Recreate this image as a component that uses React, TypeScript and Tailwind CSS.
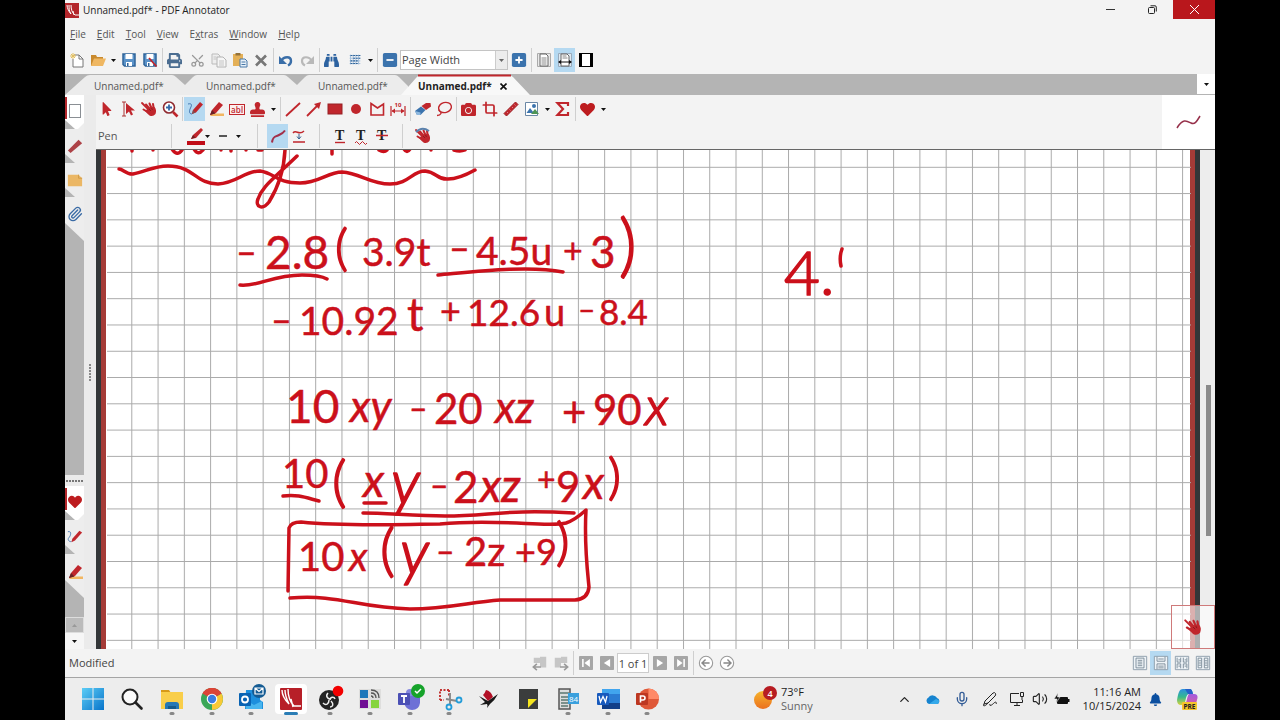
import React from 'react';
import {
  FaBinoculars, FaCamera, FaHeart, FaMousePointer, FaPrint, FaStamp, FaBell,
} from 'react-icons/fa';
import { Crop, Paperclip, Mic, Volume2, ChevronUp, Scissors } from 'lucide-react';

type Kids = { children?: React.ReactNode };

const Svg = ({ s = 18, children }: Kids & { s?: number }) => (
  <svg width={s} height={s} viewBox="0 0 18 18" fill="none" aria-hidden="true">{children}</svg>
);

const Btn = ({ label, on, children }: Kids & { label: string; on?: boolean }) => (
  <button
    type="button"
    aria-label={label}
    className={'flex h-[24px] w-[21px] shrink-0 items-center justify-center ' + (on ? 'bg-[#b5d9f1]' : '')}
  >
    {children}
  </button>
);

const Sep = () => (
  <div className="flex h-[24px] w-1 shrink-0 justify-center"><div className="h-full w-px bg-[#cfcfcf]" /></div>
);

const Caret = ({ label }: { label: string }) => (
  <button type="button" aria-label={label} className="flex h-[24px] w-[10px] shrink-0 items-center justify-center">
    <svg width="5" height="3" viewBox="0 0 5 3"><path d="M0 0h5L2.5 3z" fill="#111" /></svg>
  </button>
);

const RED = '#c0262c';
const BLUE = '#3b73ad';

const Hand = ({ size = 18 }: { size?: number }) => (
  <Svg s={size}>
    <path d="M2 3l7 7" stroke={RED} strokeWidth="1.800" strokeLinecap="round" />
    <path d="M6 4.500l5 6M9.500 3.500l3 7M13 4l1 6M3.500 9.500l5 3" stroke={RED} strokeWidth="2" strokeLinecap="round" />
    <path d="M7 9.500Q10 6 14.500 7Q17 10 15.500 14Q13 17 9.500 15.500Q8 14.500 4.500 10.500z" fill={RED} />
    <path d="M9 9l2 2M11.500 8l1 2" stroke="#7c151a" strokeWidth=".7" />
  </Svg>
);

const Floppy = ({ pen }: { pen?: boolean }) => (
  <Svg>
    <path d="M3 3h12v12H4.500L3 13.500z" stroke="#2f6499" strokeWidth="1.500" fill="#5b93c9" />
    <path d="M5.500 3h7v5h-7z" fill="#fff" />
    <path d="M6 11h6v4H6z" fill="#fff" />
    <path d="M7 12h1.500v3H7z" fill="#2f6499" />
    {pen && <path d="M8 7l7.500 8.500" stroke={RED} strokeWidth="1.800" />}
  </Svg>
);

const FILE_MENU: [string, string, string][] = [
  ['', 'F', 'ile'], ['', 'E', 'dit'], ['', 'T', 'ool'], ['', 'V', 'iew'], ['E', 'x', 'tras'], ['', 'W', 'indow'], ['', 'H', 'elp'],
];

function TitleBar() {
  return (
    <header className="flex h-[22px] items-start justify-between">
      <div className="flex h-[21px] items-center gap-[3px]">
        <svg width="15" height="17" viewBox="0 0 15 17" aria-hidden="true">
          <rect y="1" width="14" height="15" fill="#b3262b" />
          <path d="M2 3c0 3 2 7 4 9C4 9 4 6 4 3M6 3c0 4 1 8 4 10h4M8 9l1 4" stroke="#fff" strokeWidth="1" fill="none" />
        </svg>
        <h1 className="text-[10px] text-[#222]">Unnamed.pdf* - PDF Annotator</h1>
      </div>
      <div className="flex h-[19px]">
        <button type="button" aria-label="Minimize" className="flex w-[42px] items-center justify-center">
          <span className="h-px w-[9px] bg-[#333]" />
        </button>
        <button type="button" aria-label="Restore" className="flex w-[42px] items-center justify-center">
          <svg width="9" height="9" viewBox="0 0 9 9" fill="none" stroke="#222">
            <rect x=".5" y="2.500" width="6" height="6" rx="1" /><path d="M2.500 .8h4.500q1.300 0 1.300 1.300v4.400" />
          </svg>
        </button>
        <button type="button" aria-label="Close" className="flex w-[42px] items-center justify-center bg-[#b9171c]">
          <svg width="9" height="9" viewBox="0 0 9 9" stroke="#fff"><path d="M0 0l9 9M9 0L0 9" /></svg>
        </button>
      </div>
    </header>
  );
}

function MainToolbar() {
  return (
    <div className="flex h-7 items-center pl-px">
      <Btn label="New"><Svg><path d="M6 4h5l4 4v8H5V8" stroke="#777" fill="#fff" /><path d="M11 4v4h4" stroke="#777" /><path d="M5 2v6M2 5h6M3 3l4 4M7 3L3 7" stroke="#e3bf5e" /></Svg></Btn>
      <Btn label="Open"><Svg><path d="M2 15V4h5l1 2h6v2" fill="#c98a2e" /><path d="M2 15L5 7.500h12L14 15z" fill="#efb762" /></Svg></Btn>
      <Caret label="Recent files" />
      <Btn label="Save"><Floppy /></Btn>
      <Btn label="Save as"><Floppy pen /></Btn>
      <Sep />
      <Btn label="Print"><FaPrint size={15} color="#4b6d91" /></Btn>
      <div className="w-0.5" />
      <Btn label="Cut"><Scissors size={15} color="#999" className="-rotate-90" /></Btn>
      <Btn label="Copy"><Svg><path d="M2 3h6l2 2v8H2z" fill="#eee" stroke="#bbb" /><path d="M7 6h6l3 3v7H7z" fill="#f6f6f6" stroke="#b4b4b4" /><path d="M9 10h5M9 12h5M9 14h5M3.500 6h3M3.500 8h3" stroke="#c4c4c4" /></Svg></Btn>
      <Btn label="Paste"><Svg><path d="M2 3h10v12H2z" fill="#e4b057" /><path d="M4.500 2h5v2.500h-5z" fill="#94723a" /><path d="M9 8h5l2 2v6H9z" fill="#e7f0f8" stroke="#4878a8" /><path d="M10.500 11h4M10.500 13.500h4" stroke="#4878a8" /></Svg></Btn>
      <Btn label="Delete"><Svg><path d="M4 4.500l10 10M14 4.500l-10 10" stroke="#777" strokeWidth="2.600" /></Svg></Btn>
      <Sep />
      <Btn label="Undo"><Svg><path d="M4 10C7 5 14 5 14 10c0 2-1 3.500-3 4.500" stroke="#3a6ea8" strokeWidth="2.400" /><path d="M2 5v8h8z" fill="#3a6ea8" /></Svg></Btn>
      <Btn label="Redo"><Svg><path d="M14 10C11 5 4 5 4 10c0 2 1 3.500 3 4.500" stroke="#b9b9b9" strokeWidth="2.200" /><path d="M16 5v8H8z" fill="#b9b9b9" /></Svg></Btn>
      <Sep />
      <Btn label="Find"><FaBinoculars size={15} color="#2c62a0" /></Btn>
      <div className="w-0.5" />
      <Btn label="Paper style"><Svg s={16}><path d="M3 4h12M3 7h12M3 10h12M3 13h12M4 3v11M7 3v11M10 3v11M13 3v11" stroke="#9dbbdb" /><path d="M4 4h11M7 7h8M4 10h8M4 13h8" stroke="#2f6499" strokeWidth="1.200" strokeDasharray="2 1" /></Svg></Btn>
      <Caret label="Paper style options" />
      <Sep />
      <Btn label="Zoom out"><Svg s={16}><rect x="1" y="1" width="16" height="16" rx="2" fill={BLUE} /><path d="M5 9h8" stroke="#fff" strokeWidth="2" /></Svg></Btn>
      <div className="relative h-5 w-[108px]">
        <select aria-label="Zoom" className="block h-5 w-full appearance-none border border-[#c4c4c4] bg-white py-0 pl-px text-[11px] leading-[18px] text-[#444]">
          <option>Page Width</option>
        </select>
        <span className="pointer-events-none absolute top-px right-px bottom-px flex w-3 items-center justify-center border-l border-[#ccc] bg-[#ececec]">
          <svg width="5" height="3" viewBox="0 0 5 3"><path d="M0 0h5L2.500 3z" fill="#666" /></svg>
        </span>
      </div>
      <Btn label="Zoom in"><Svg s={16}><rect x="1" y="1" width="16" height="16" rx="2" fill={BLUE} /><path d="M5 9h8M9 5v8" stroke="#fff" strokeWidth="2" /></Svg></Btn>
      <Sep />
      <Btn label="Full page"><Svg><path d="M2.500 2.500h13v13h-13z" stroke="#aaa" fill="#e9e9e9" /><path d="M5 3h6l2 2v10H5z" fill="#fff" stroke="#666" /><path d="M6.500 7h5M6.500 9h5M6.500 11h5M6.500 13h5" stroke="#888" /></Svg></Btn>
      <Btn label="Page width" on><Svg><path d="M2.500 2.500h13v13h-13z" stroke="#9ab" fill="#dfe9f1" /><path d="M5 3h6l2 2v10H5z" fill="#fff" stroke="#666" /><path d="M6.500 5h4M6.500 7h5" stroke="#888" /><path d="M3 11h12" stroke="#111" /><path d="M2 11l3-2v4zM16 11l-3-2v4z" fill="#111" /></Svg></Btn>
      <Btn label="Full screen"><Svg><rect x="2" y="2" width="14" height="14" fill="#000" /><rect x="5" y="3" width="8" height="12" fill="#fff" /></Svg></Btn>
    </div>
  );
}

function DocumentTabs() {
  return (
    <nav aria-label="Documents" className="relative flex h-[21px] bg-[#b4b4b4] pt-1 text-[10px]">
      <svg className="absolute top-0 left-0" width="466" height="21" viewBox="0 0 466 21" aria-hidden="true">
        <path d="M0 21L20 3Q22 1 25 1H107Q109 1 111 3L120 11L128 3Q130 1 132 1H219Q221 1 223 3L232 11L240 3Q242 1 244 1H330Q332 1 334 3L343 12V21z" fill="#ececec" />
        <path d="M336 21L351 4Q353 1 357 1H443Q446 1 448 3L465 21z" fill="#f8f8f8" />
        <path d="M353 1.500H446" stroke={RED} strokeWidth="2" />
      </svg>
      <div className="relative flex pl-[29px]">
        {[0, 1, 2].map((i) => (
          <a key={i} href="#doc" className="flex w-[112px] shrink-0 items-center text-[#555]">Unnamed.pdf*</a>
        ))}
      </div>
      <a href="#doc" className="relative -ml-3 flex shrink-0 items-center gap-2 font-bold text-[#222]">
        Unnamed.pdf*
        <svg width="7" height="7" viewBox="0 0 7 7"><path d="M.5 .5l6 6M6.500 .5l-6 6" stroke="#111" strokeWidth="1.600" /></svg>
      </a>
      <div className="flex-1" />
      <button type="button" aria-label="List documents" className="-mt-1 mb-px flex w-[18px] items-center justify-center bg-white">
        <svg width="5" height="3" viewBox="0 0 5 3"><path d="M0 0h5L2.500 3z" fill="#111" /></svg>
      </button>
    </nav>
  );
}

const Pen = () => (
  <Svg><path d="M2 4c4-1 4 1 2.500 4S3 14 6 14" stroke="#4477b0" /><path d="M6 14l1-4 7-8 3 2.500-7 8z" fill={RED} /><path d="M6 14l1-4 2.500 2.500z" fill="#7a5050" /></Svg>
);

const Marker = () => (
  <Svg><path d="M5 13.500h12v2.500H3z" fill="#f2b661" /><path d="M3 15l2-5 7-8 4 3-7 8z" fill={RED} /><path d="M3 15l2-5 3.500 3.500z" fill="#6a2226" /></Svg>
);

function DrawingTools() {
  return (
    <div className="flex h-7 items-center">
      <Btn label="Select"><FaMousePointer size={14} color={RED} /></Btn>
      <Btn label="Select text"><Svg><path d="M3 2h4M5 2v14M3 16h4" stroke="#a33" /><path d="M7 3v11l3-2.500 2 4 2-1-2-4h4z" fill={RED} /></Svg></Btn>
      <Btn label="Pan"><Hand /></Btn>
      <Btn label="Magnify"><Svg><circle cx="8" cy="7.500" r="5.500" stroke="#8f2a30" strokeWidth="1.600" fill="#fff" /><path d="M12 12l4.500 4.500" stroke={RED} strokeWidth="2.600" /><path d="M8 4.500v6M5 7.500h6" stroke="#3468a8" strokeWidth="1.800" /></Svg></Btn>
      <Sep />
      <Btn label="Pen" on><Pen /></Btn>
      <Btn label="Marker"><Marker /></Btn>
      <Btn label="Text"><Svg><rect x="1.500" y="4.500" width="15" height="10" stroke={RED} fill="#fbeeee" /><text x="3" y="12.500" fontSize="8" fontWeight="600" fill={RED}>ab</text><path d="M14 6v7" stroke={RED} /></Svg></Btn>
      <Btn label="Stamp"><FaStamp size={15} color={RED} /></Btn>
      <Caret label="Stamps" />
      <Sep />
      <Btn label="Line"><Svg><path d="M2 16L16 3" stroke={RED} strokeWidth="1.800" /></Svg></Btn>
      <Btn label="Arrow"><Svg><path d="M2 16L13 5" stroke={RED} strokeWidth="1.800" /><path d="M16 2l-2 7-5-5z" fill={RED} /></Svg></Btn>
      <Btn label="Rectangle"><Svg><rect x="2" y="4" width="14" height="10" fill={RED} stroke="#962025" /></Svg></Btn>
      <Btn label="Ellipse"><Svg><circle cx="9" cy="9" r="5" fill={RED} /></Svg></Btn>
      <Btn label="Polygon"><Svg><path d="M3 3.500l6.500 4.500L15.500 4v11H3z" stroke={RED} strokeWidth="1.600" /></Svg></Btn>
      <Btn label="Measure"><Svg><path d="M2 6v10M16 6v10M3 11h12" stroke={RED} strokeWidth="1.200" /><path d="M2.500 11l3.500-2.500v5zM15.500 11l-3.500-2.500v5z" fill={RED} /><text x="5.500" y="7" fontSize="6" fontWeight="700" fill={RED}>10</text></Svg></Btn>
      <Sep />
      <Btn label="Eraser"><Svg><path d="M1 11l6-4.500 4.500 3.500-5 5H3z" fill={BLUE} /><path d="M7.500 6L12 3h4.500l.5 3.500-5 3.500z" fill={RED} /><path d="M1 11l5.500 1.500v2.500H3z" fill="#8db8df" /></Svg></Btn>
      <Btn label="Lasso"><Svg><ellipse cx="10" cy="7.500" rx="6.500" ry="5" stroke={RED} strokeWidth="1.400" transform="rotate(-15 10 7.500)" /><path d="M4 9.500c-1 2 3 2 2 4s-2 2-4 2" stroke={RED} strokeWidth="1.400" /></Svg></Btn>
      <Sep />
      <Btn label="Snapshot"><FaCamera size={15} color={RED} /></Btn>
      <Btn label="Crop"><Crop size={16} color={RED} strokeWidth={2.600} /></Btn>
      <Btn label="Ruler"><Svg><path d="M2 13.500L13.500 2 16 4.500 4.500 16z" fill={RED} stroke="#9d2025" /><path d="M5 12l1 1M7.500 9.500l1 1M10 7l1 1M12.500 4.500l1 1" stroke="#eab" strokeWidth=".7" /></Svg></Btn>
      <Btn label="Image"><Svg><path d="M2.500 2.500h12v13h-12z" stroke="#6a87a5" fill="#fff" /><path d="M3.500 13l3.500-5 4 5z" fill="#3b73ad" /><circle cx="11" cy="6" r="2" fill="#3b73ad" /><path d="M8 14h8l-4-5z" fill="#4d9455" /></Svg></Btn>
      <Caret label="Images" />
      <Btn label="Formula"><Svg><path d="M14 6V3H3.500l5.500 6-5.500 6H14v-3" stroke={RED} strokeWidth="2.200" /></Svg></Btn>
      <Sep />
      <Btn label="Favorites"><FaHeart size={15} color="#bd1c1f" /></Btn>
      <Caret label="More favorites" />
    </div>
  );
}

const Tee = ({ children }: Kids) => (
  <Svg><text x="4" y="13" fontSize="14" fontWeight="700" fontFamily="Liberation Serif, serif" fill="#222">T</text>{children}</Svg>
);

function ToolOptions() {
  return (
    <div className="flex h-[26px] items-center">
      <span className="w-[73px] pl-0.5 text-[11px] text-[#555]">Pen</span>
      <Sep />
      <div className="w-3" />
      <Btn label="Color"><Svg><path d="M4 12l2-4 8-7 2 2-7 8z" fill={RED} /><path d="M4 12l2-4 2.500 2.500z" fill="#701c20" /><path d="M0 14h18v4H0z" fill="#c00d18" /></Svg></Btn>
      <div className="-ml-1 flex">
        <Caret label="Colors" />
        <Btn label="Width"><svg width="8" height="2" viewBox="0 0 8 2"><path d="M0 1h8" stroke="#222" strokeWidth="1.500" /></svg></Btn>
      </div>
      <Caret label="Widths" />
      <div className="ml-3"><Sep /></div>
      <div className="w-2" />
      <Btn label="Smooth" on><Svg><path d="M3 15.500c1-7 4-6 6-7s5-2 7-5" stroke="#a3304a" strokeWidth="2" /></Svg></Btn>
      <Btn label="Pressure"><Svg><path d="M3 6c3-4 6 3 11-2M3 15h12" stroke={RED} strokeWidth="1.400" /><path d="M9 7v5M7 9.500L9 12l2-2.500" stroke="#345f90" /></Svg></Btn>
      <div className="ml-2"><Sep /></div>
      <div className="w-2" />
      <Btn label="Underline text"><Tee><path d="M4 15.500h10" stroke={RED} strokeWidth="1.400" /></Tee></Btn>
      <Btn label="Squiggle text"><Tee><path d="M3 16q1.500-3 3 0t3 0 3 0 3 0" stroke={RED} /></Tee></Btn>
      <Btn label="Strike text"><Tee><path d="M3 8.500h12" stroke={RED} strokeWidth="1.500" /></Tee></Btn>
      <div className="ml-2"><Sep /></div>
      <div className="w-2" />
      <Btn label="Touch mode">
        <span className="relative flex">
          <Hand />
          <svg className="absolute top-0 left-0" width="18" height="7" viewBox="0 0 18 7" fill="none"><path d="M2 5Q8-1 15 4" stroke="#5b82ad" strokeWidth="2" /></svg>
        </span>
      </Btn>
    </div>
  );
}

const SideTab = ({ label, on, last, children }: Kids & { label: string; on?: boolean; last?: boolean }) => (
  <button
    type="button"
    aria-label={label}
    className={'relative flex w-[19px] shrink-0 justify-center pt-[9px] ' + (last ? 'h-11 ' : 'h-[34px] ') + (on ? 'bg-white' : 'bg-[#ededed]')}
  >
    <svg className="absolute bottom-0 left-0" width="19" height="18" viewBox="0 0 19 18" aria-hidden="true">
      {last ? <path d="M0 0l19 18H0z" fill="#b4b4b4" /> : <path d="M0 9l10 9H0z" fill="#b4b4b4" />}
      {on && <path d="M13 18l6-6v6z" fill="#ededed" />}
    </svg>
    {on && <span className="absolute top-0.5 left-0 h-[22px] w-0.5 bg-[#b3262b]" />}
    <span className="relative">{children}</span>
  </button>
);

function Sidebar() {
  return (
    <aside className="flex w-[31px] shrink-0 bg-[#ebebeb]">
      <div className="flex w-[19px] flex-col bg-[#b4b4b4]">
        <SideTab label="Pages" on><svg width="12" height="15" viewBox="0 0 12 15"><rect x=".5" y=".5" width="11" height="13" fill="#fff" stroke="#8a8f94" /></svg></SideTab>
        <SideTab label="Annotations"><Svg s={16}><path d="M1 14L13 2l4 4L4 17z" fill="#ad4247" /></Svg></SideTab>
        <SideTab label="Bookmarks"><Svg s={16}><path d="M1 3h12l4 4v9H1z" fill="#ebb765" /><path d="M13 3v4h4" stroke="#cf9a45" /></Svg></SideTab>
        <SideTab label="Attachments" last><Paperclip size={16} color="#3a6ba5" /></SideTab>
        <div className="min-h-10 flex-1" />
        <div className="flex h-[11px] items-center justify-center gap-px bg-[#ebebeb]">
          {[0, 1, 2, 3, 4, 5].map((i) => <span key={i} className="h-0.5 w-0.5 bg-[#777]" />)}
        </div>
        <SideTab label="Favorites" on><FaHeart size={14} color="#bd1c1f" /></SideTab>
        <SideTab label="Favorite pen"><Svg s={16}><path d="M1 3c5-1 3 5 1 7s1 5 3 4" stroke="#4477b0" /><path d="M5 15l1-4 8-9 3 2-8 9z" fill={RED} /></Svg></SideTab>
        <SideTab label="Favorite marker" last><Marker /></SideTab>
        <div className="h-[19px] bg-[#b4b4b4]" />
        <button type="button" aria-label="Scroll up" className="flex h-4 items-center justify-center border border-[#ddd] bg-[#bbb]">
          <svg width="5" height="3" viewBox="0 0 5 3"><path d="M0 3h5L2.500 0z" fill="#999" /></svg>
        </button>
        <button type="button" aria-label="Scroll down" className="flex h-4 items-center justify-center bg-[#f6f6f6]">
          <svg width="5" height="3" viewBox="0 0 5 3"><path d="M0 0h5L2.500 3z" fill="#111" /></svg>
        </button>
      </div>
      <div className="flex flex-1 flex-col items-center justify-center gap-px">
        {[0, 1, 2, 3, 4, 5].map((i) => <span key={i} className="h-0.5 w-0.5 bg-[#888]" />)}
      </div>
    </aside>
  );
}

type Note = [text: string, x: number, y: number, size: number, italic?: boolean];

const NOTES: Note[] = [
  ['–', 236, 265, 36], ['2.8', 265, 269, 46], ['(', 335, 265, 50], ['3.9t', 362, 266, 39], ['–', 449, 261, 36],
  ['4.5u', 476, 265, 39], ['+', 563, 263, 34], ['3', 590, 268, 44], [')', 619, 269, 68],
  ['–', 271, 333, 36], ['10.92', 299, 335, 39], ['t', 407, 331, 46], ['+', 440, 324, 36], ['12.6', 467, 326, 37],
  ['u', 544, 326, 38], ['–', 578, 320, 30], ['8.4', 599, 325, 35],
  ['10', 286, 423, 46], ['xy', 350, 422, 44, true], ['–', 409, 420, 32], ['20', 434, 424, 42], ['xz', 495, 423, 44, true],
  ['+', 562, 427, 42], ['90', 593, 425, 42], ['x', 645, 425, 54, true],
  ['10', 282, 488, 40], ['(', 332, 501, 56], ['x', 363, 497, 46, true], ['y', 391, 504, 62, true], ['–', 430, 497, 32],
  ['2', 453, 503, 44], ['xz', 480, 502, 46, true], ['+', 537, 491, 32], ['9', 556, 502, 42], ['x', 583, 499, 46, true],
  [')', 608, 494, 50],
  ['10', 298, 571, 40], ['x', 349, 571, 40, true], ['(', 380, 570, 58], ['y', 400, 574, 62, true], ['–', 436, 563, 32],
  ['2z', 464, 566, 40], ['+9', 515, 565, 36], [')', 556, 560, 52],
  ['4.', 784, 295, 62],
];

const STROKES = [
  'M119 169C123 169 127 175 133 174C145 172 153 166 168 166C194 166 196 184 218 184C237 183 244 171 260 171C275 173 276 183 300 183C319 183 328 172 342 172C360 173 370 184 390 184C409 184 412 171 425 171C437 172 437 180 448 179C457 179 466 175 475 170',
  'M285 150C284 171 279 186 269 202C262 211 255 206 258 199C262 187 271 181 297 156',
  'M172 149q5 8 10 1M194 149q4 7 9 1M132 149v2M153 149v1M221 149v1M231 149v2M246 149v1M258 150h4M332 149v5M379 150q5 3 8 0M404 149q3 5 6 0M431 149v1M454 150q6 2 11 0',
  'M240 285C258 287 272 275 302 275Q320 275 327 279',
  'M438 275C472 272 528 265 563 272',
  'M283 496C298 494 307 498 319 501', 'M364 503h22',
  'M363 513C386 513 415 516 445 516C490 516 505 509 574 513',
  'M288 591L289 528Q291 522 301 522C350 527 405 524 440 524C500 518 548 528 566 523Q575 520 586 510C584 545 588 576 589 587Q588 599 575 600H500C470 602 448 609 410 609C357 608 340 594 290 598',
  'M842 249q-3 8-1 17',
];

function Workspace() {
  return (
    <main className="relative flex min-h-0 flex-1 border-t border-[#666] bg-[#ededed]">
      <div className="w-[5px] bg-[#333638]" />
      <div className="w-[5px] bg-[#a53b37]" />
      <div className="flex-1 bg-white" />
      <div className="w-[5px] bg-[#a53b37]" />
      <div className="mr-[15px] w-[5px] bg-[#333638]" />
      <svg className="absolute inset-y-0 right-6 left-[11px] h-full w-[calc(100%-35px)]" role="img" aria-label="Graph paper with ink notes">
        <defs>
          <pattern id="squares" x="24.300" y="16.800" width="26.270" height="26.280" patternUnits="userSpaceOnUse">
            <path d="M.5 0V26.280M0 .5H26.270" stroke="#a9a9a9" strokeWidth="1" />
          </pattern>
        </defs>
        <rect width="100%" height="100%" fill="url(#squares)" />
        <g transform="translate(-107 -150)" fontFamily="Lato, sans-serif" fill="#cb101b" stroke="#cb101b" strokeLinejoin="round" strokeLinecap="round">
          <g fill="none" strokeWidth="3.500">{STROKES.map((d) => <path key={d} d={d} />)}</g>
          <g>
            {NOTES.map(([t, x, y, size, italic]) => (
              <text
                key={x + '-' + y}
                x={x}
                y={y}
                fontSize={size}
                fontStyle={italic ? 'italic' : 'normal'}
                fontWeight={size > 48 ? 300 : 400}
                strokeWidth={size > 48 ? 1.7 : 0.5}
              >
                {t}
              </text>
            ))}
          </g>
        </g>
      </svg>
      <div className="absolute top-[235px] right-1 h-[151px] w-[5px] bg-[#8b8b8b]" />
      <button type="button" aria-label="Touch panning" className="absolute right-0 bottom-0 flex h-11 w-11 items-center justify-center border border-[#cf7a7a] bg-white/60">
        <Hand size={20} />
      </button>
    </main>
  );
}

const PageLayout = ({ kind }: { kind: number }) => (
  <Svg s={16}>
    <path d="M1.500 1.500h15v15h-15z" stroke="#8a9aa8" fill="#eef3f7" />
    {kind === 0 && <path d="M4.500 3.500h9v11h-9zM6.500 6h5M6.500 8h5M6.500 10h5M6.500 12h5" stroke="#788896" />}
    {kind === 1 && <path d="M4.500 2v5h9V2M4.500 16v-6h9v6M6 4.500h6M6 12.500h6M6 14.500h6" stroke="#788896" />}
    {kind === 2 && <path d="M3.500 3v5h4V3M10.500 3v5h4V3M3.500 15v-5h4v5M10.500 15v-5h4v5M5 5.500h2M12 5.500h2M5 12.500h2M12 12.500h2" stroke="#788896" />}
    {kind === 3 && <path d="M3.500 3.500h4v11h-4zM10.500 3.500h4v11h-4zM4 6.500h3M4 9h3M4 11.500h3M11 6.500h3M11 9h3M11 11.500h3" stroke="#788896" />}
  </Svg>
);

const NavBtn = ({ label, d }: { label: string; d: string }) => (
  <Btn label={label}><Svg s={14}><rect width="18" height="18" rx="1" fill="#a6a6a6" /><path d={d} fill="#fff" /></Svg></Btn>
);

function StatusBar() {
  return (
    <footer className="grid h-[29px] grid-cols-[1fr_auto_1fr] items-center border-b border-[#a5a5a5] bg-[#f3f3f3] text-[11px] text-[#444]">
      <span className="pl-1">Modified</span>
      <div className="flex items-center pr-[14px]">
        {[0, 1].map((i) => (
          <Btn key={i} label={i ? 'Next view' : 'Previous view'}>
            <Svg s={16}><path d="M2 3h7V2h7v12H2z" fill="#c6c6c6" /><path d={i ? 'M9 9h9v9H9z' : 'M0 9h9v9H0z'} fill="#f3f3f3" /><path d={i ? 'M8 13.500h8M12.500 10l4 3.500-4 3.500' : 'M2 13.500h8M5.500 10l-4 3.500 4 3.500'} stroke="#999" strokeWidth="1.800" /></Svg>
          </Btn>
        ))}
        <Sep />
        <NavBtn label="First page" d="M4 4h2v10H4zM14 4v10L7 9z" />
        <NavBtn label="Previous page" d="M13 4v10L5 9z" />
        <input aria-label="Page" defaultValue="1 of 1" className="h-5 w-8 border border-[#ccc] bg-white text-center text-[11px]" />
        <NavBtn label="Next page" d="M5 4v10l8-5z" />
        <NavBtn label="Last page" d="M4 4v10l7-5zM12 4h2v10h-2z" />
        <Sep />
        <Btn label="Back"><Svg s={16}><circle cx="9" cy="9" r="7.500" stroke="#999" strokeWidth="1.200" fill="#fff" /><path d="M13 9H5M8.500 5L4.500 9l4 4" stroke="#888" strokeWidth="1.600" /></Svg></Btn>
        <Btn label="Forward"><Svg s={16}><circle cx="9" cy="9" r="7.500" stroke="#999" strokeWidth="1.200" fill="#fff" /><path d="M5 9h8M9.500 5l4 4-4 4" stroke="#888" strokeWidth="1.600" /></Svg></Btn>
      </div>
      <div className="flex justify-end pr-0.5">
        {['Single page', 'Continuous', 'Facing continuous', 'Facing'].map((l, i) => (
          <Btn key={l} label={l} on={i === 1}><PageLayout kind={i} /></Btn>
        ))}
      </div>
    </footer>
  );
}

const AppIcon = ({ children }: Kids) => (
  <svg width="24" height="24" viewBox="0 0 24 24" fill="none" className="overflow-visible" aria-hidden="true">{children}</svg>
);

const APPS: { name: string; running?: boolean; active?: boolean; icon: React.ReactNode }[] = [
  { name: 'Start', icon: <AppIcon><defs><linearGradient id="win" x1="0" y1="0" x2="1" y2="1"><stop stopColor="#5ccdf6" /><stop offset="1" stopColor="#0874ca" /></linearGradient></defs><path d="M1 1h10.500v10.500H1zM12.500 1H23v10.500H12.500zM1 12.500h10.500V23H1zM12.500 12.500H23V23H12.500z" fill="url(#win)" /></AppIcon> },
  { name: 'Search', icon: <AppIcon><circle cx="10" cy="10" r="7.500" stroke="#222" strokeWidth="2" fill="#fafafa" /><path d="M15.500 15.500l6 6" stroke="#222" strokeWidth="2.600" strokeLinecap="round" /></AppIcon> },
  { name: 'File Explorer', running: true, icon: <AppIcon><path d="M1 3h8l2 3H1z" fill="#d79a18" /><path d="M1 5h22v17H1z" fill="#f9ce4a" /><path d="M5 22v-4q0-3 3-3h8q3 0 3 3v4z" fill="#2678b5" /><path d="M8 19h8v3H8z" fill="#155a8b" /></AppIcon> },
  { name: 'Chrome', running: true, icon: <AppIcon><circle cx="12" cy="12" r="11" fill="#3aa757" /><path d="M12 12l9.500-5.500A11 11 0 0112 23z" fill="#f8c935" /><path d="M2.500 6.500A11 11 0 0121.500 6.500H12z" fill="#db4437" /><path d="M12 12L2.500 6.500A11 11 0 0121.500 6.500z" fill="#db4437" /><circle cx="12" cy="12" r="5.300" fill="#fff" /><circle cx="12" cy="12" r="4.200" fill="#3c7de0" /></AppIcon> },
  { name: 'Outlook', running: true, icon: <AppIcon><path d="M7 3h14v10l3 2v7H6z" fill="#1d8fdd" /><path d="M7 13l8 5 8-4v8H7z" fill="#48b5ee" /><rect y="6" width="12" height="13" rx="1" fill="#0963b3" /><circle cx="6" cy="12.500" r="3" stroke="#fff" strokeWidth="1.800" /><circle cx="20" cy="4" r="7" fill="#145b93" /><path d="M16 1h8v6h-8zM16 1l4 3.500L24 1" stroke="#fff" strokeWidth="1.200" /></AppIcon> },
  { name: 'PDF Annotator', running: true, active: true, icon: <AppIcon><rect x="1" y="1" width="22" height="22" rx="1" fill="#b71f28" /><path d="M3 3c0 5 3 10 7 14C7 11 6 7 6 3M9 2c0 7 2 13 6 17h7M12 12l2 8" stroke="#fff" strokeWidth="1.400" /></AppIcon> },
  { name: 'OBS Studio', running: true, icon: <AppIcon><circle cx="11" cy="13" r="10" fill="#232323" /><path d="M10 6c-3 3 0 6 2 6M17 12c-1-3-5-2-5 1M5 16c3 3 6 1 6-3M12 20c3 0 4-3 1-6" stroke="#eee" strokeWidth="1.500" /><circle cx="20" cy="4" r="5.300" fill="#f20000" /></AppIcon> },
  { name: 'Quick Assist', running: true, icon: <AppIcon><rect x="1" y="2" width="22" height="20" fill="#dededd" /><path d="M2 3h8v8H2z" fill="#1d78ba" /><path d="M2 13h8v8H2z" fill="#700d94" /><path d="M13 13h8v8h-8z" fill="#86d43f" /><path d="M13 3q8 0 8 8M13 6q5 0 5 5M13 9q2 0 2 2" stroke="#555" strokeWidth="1.300" /></AppIcon> },
  { name: 'Teams', running: true, icon: <AppIcon><circle cx="12" cy="6" r="4" fill="#8588df" /><path d="M6 9h16v7q-1 7-8 7-6 0-8-7z" fill="#6e70d6" /><rect y="6" width="12" height="12" rx="1" fill="#4b50b5" /><path d="M3 9h6M6 9v7" stroke="#fff" strokeWidth="1.800" /><circle cx="20" cy="4" r="7" fill="#16a32a" /><path d="M17 4l2 2 4-4" stroke="#fff" strokeWidth="1.500" /></AppIcon> },
  { name: 'Snipping Tool', running: true, icon: <AppIcon><path d="M12 3H3v10M12 3v6M3 13h4" stroke="#c43634" strokeWidth="2" strokeDasharray="2 1.500" /><path d="M13 6v12M9 12l11 2" stroke="#888" strokeWidth="1.900" /><circle cx="12" cy="20" r="2.500" stroke="#239cd8" strokeWidth="1.800" /><circle cx="22" cy="13" r="2.500" stroke="#239cd8" strokeWidth="1.800" /></AppIcon> },
  { name: 'Racket', icon: <AppIcon><path d="M6 8Q8 6 9 3q5 1 7 7l-5 4z" fill="#b21026" /><path d="M2 9l9 5L21 7q-3 6-8 10l-3 4q1-3 0-4l-7 1 5-3z" fill="#181818" /></AppIcon> },
  { name: 'Sticky Notes', icon: <AppIcon><path d="M3 2h19v20H3z" fill="#3b3d3d" /><path d="M12 12h9l-9 9z" fill="#f5e51e" /></AppIcon> },
  { name: 'Calculator', running: true, icon: <AppIcon><path d="M3 2h11v20H3z" fill="#ddd" stroke="#555" strokeWidth="1.500" /><path d="M4 6h9M5 10h7M5 13h7M5 16h7M5 19h7" stroke="#5c7770" strokeWidth="1.400" /><rect x="12" y="6" width="11" height="11" fill="#3aa0dd" /><text x="13" y="15" fontSize="8" fill="#fff">84</text></AppIcon> },
  { name: 'Word', running: true, icon: <AppIcon><path d="M6 2h18v20H6z" fill="#2b7cd3" /><path d="M6 2h18v5H6z" fill="#41a5ee" /><path d="M6 16h18v6H6z" fill="#123f88" /><rect x="1" y="6" width="12" height="12" rx="1" fill="#185abd" /><path d="M3 9l1.500 6L7 9.500 9.500 15 11 9" stroke="#fff" strokeWidth="1.300" /></AppIcon> },
  { name: 'PowerPoint', running: true, icon: <AppIcon><circle cx="13.500" cy="12" r="10.500" fill="#df5838" /><path d="M13.500 1.500A10.500 10.500 0 0124 12H13.500z" fill="#ff8a68" /><rect x="1" y="6" width="12" height="12" rx="1" fill="#bd3721" /><path d="M5.500 15.500V9h2.500q2 0 2 2t-2 2H5.500" stroke="#fff" strokeWidth="1.600" /></AppIcon> },
];

function Taskbar() {
  return (
    <nav aria-label="Taskbar" className="flex h-[42px] items-center bg-[#ededed] pl-2">
      <div className="grid w-[594px] shrink-0 grid-cols-15">
        {APPS.map((a) => (
          <button key={a.name} type="button" aria-label={a.name} className="relative flex h-[42px] items-center justify-center">
            {a.active && <span className="absolute inset-x-1 inset-y-1.5 rounded-sm bg-white" />}
            <span className="relative">{a.icon}</span>
            {a.running && (
              <span className={'absolute bottom-[5px] left-1/2 h-[3px] -translate-x-1/2 rounded-full ' + (a.active ? 'w-3.5 bg-[#2a7db5]' : 'w-[5px] bg-[#888]')} />
            )}
          </button>
        ))}
      </div>
      <div className="ml-[86px] flex items-center gap-[3px]">
        <svg width="25" height="26" viewBox="0 0 25 26" aria-hidden="true">
          <defs><linearGradient id="sun" x1="0" y1="0" x2="0" y2="1"><stop stopColor="#f6b42c" /><stop offset="1" stopColor="#eb701f" /></linearGradient></defs>
          <circle cx="10" cy="14" r="9" fill="url(#sun)" /><circle cx="17" cy="7" r="7" fill="#b71c22" />
          <text x="17" y="10.500" fontSize="9" textAnchor="middle" fontWeight="600" fill="#fff">4</text>
        </svg>
        <div className="text-[11px] leading-[14px] text-[#222]"><p>73°F</p><p className="text-[#666]">Sunny</p></div>
      </div>
      <div className="flex-1" />
      <div className="flex shrink-0 items-center text-[#222]">
        <button type="button" aria-label="Hidden icons" className="flex w-[26px] justify-center"><ChevronUp size={15} /></button>
        <button type="button" aria-label="OneDrive" className="flex w-8 justify-center"><svg width="16" height="11" viewBox="0 0 16 11"><path d="M4 10a3.500 3.500 0 01-.5-6.500A5 5 0 0112 4a3.200 3.200 0 01.5 6z" fill="#1683cf" /><path d="M4 10l7-5 3 1.500a3 3 0 01-1.500 3.500z" fill="#35a9ea" /></svg></button>
        <button type="button" aria-label="Microphone" className="flex w-[26px] justify-center"><Mic size={16} color="#345d97" /></button>
        <button type="button" aria-label="Pen menu" className="flex w-[30px] justify-center"><svg width="16" height="16" viewBox="0 0 16 16" fill="none" stroke="#222"><path d="M3 10L11 2q2-1 2.500.5T13 5L6 12l-4 1zM2 13c-2 3 2 2 4-1M8 13c-1 3 2 1 4-1s3 0 2 1" /></svg></button>
        <button type="button" aria-label="Network" className="flex w-6 justify-center"><svg width="16" height="16" viewBox="0 0 16 16" fill="none" stroke="#222"><path d="M10 2.500H1.500v9h12V9M5 14.500h6M8 12v2M11.500 1.500h3v4h-3zM13 5.500V9" /></svg></button>
        <button type="button" aria-label="Volume" className="flex w-[22px] justify-center"><Volume2 size={16} strokeWidth={1.700} /></button>
        <button type="button" aria-label="Battery" className="flex w-[22px] justify-center"><svg width="16" height="12" viewBox="0 0 16 12"><rect x="3" y="4" width="11" height="7" rx="1" fill="#111" /><path d="M14 6h1.500v3H14z" fill="#111" /><path d="M4 0L0 6h3l-1 4 4-6H3.500z" fill="#111" stroke="#ededed" strokeWidth=".6" /></svg></button>
        <time className="w-[68px] text-right text-[11px] leading-[14px]">11:16 AM<br />10/15/2024</time>
        <button type="button" aria-label="Notifications" className="flex w-7 justify-center"><FaBell size={13} color="#0b4fa0" /></button>
        <button type="button" aria-label="Copilot" className="mr-4 ml-1.5 flex w-6 justify-center">
          <svg width="22" height="22" viewBox="0 0 22 22" aria-hidden="true">
            <defs>
              <linearGradient id="cp1" x1="0" y1="0" x2="0" y2="1"><stop stopColor="#2b8fe0" /><stop offset=".5" stopColor="#35b98d" /><stop offset="1" stopColor="#d9d33c" /></linearGradient>
              <linearGradient id="cp2" x1="0" y1="0" x2="0" y2="1"><stop stopColor="#a05be0" /><stop offset="1" stopColor="#ee5f8c" /></linearGradient>
            </defs>
            <path d="M7 1h7q2 0 3 5h-4q-2 0-3 4l-1 4q-1 3-4 3Q1 17 1 12Q2 6 3 4q1-3 4-3z" fill="url(#cp1)" />
            <path d="M13 6h5q4 0 3.500 4Q20 16 19 18q-1 3-4 3h-5q-2 0-3-3 2 0 3-3l1.500-6q.5-2 1.500-3z" fill="url(#cp2)" />
            <path d="M9 1h5q2 0 3 5h-5z" fill="#2460c9" />
            <rect x="6" y="14" width="15" height="8" rx="1" fill="#f6c62c" /><text x="13.500" y="20.500" fontSize="6.500" fontWeight="700" textAnchor="middle" fill="#222">PRE</text>
          </svg>
        </button>
      </div>
    </nav>
  );
}

export default function App() {
  return (
    <div className="flex min-h-screen bg-black px-[65px] font-['Open_Sans','Noto_Sans',sans-serif]">
      <div className="flex min-w-0 flex-1 flex-col overflow-hidden bg-[#f3f3f3]">
        <TitleBar />
        <nav aria-label="Menu" className="flex h-6 items-center gap-[11px] pl-[5px] text-[10px] text-[#555]">
          {FILE_MENU.map(([a, b, c]) => (
            <button key={b + c} type="button">{a}<u className="underline-offset-1">{b}</u>{c}</button>
          ))}
        </nav>
        <MainToolbar />
        <DocumentTabs />
        <div className="flex flex-1">
          <Sidebar />
          <div className="flex min-w-0 flex-1 flex-col">
            <div className="flex">
              <div className="min-w-0 flex-1"><DrawingTools /><ToolOptions /></div>
              <div className="flex w-[53px] items-center justify-center bg-white">
                <svg width="25" height="14" viewBox="0 0 25 14" fill="none"><path d="M1 13C7 3 11 6 15 8s6-2 9-7" stroke="#96304a" strokeWidth="1.500" /></svg>
              </div>
            </div>
            <Workspace />
          </div>
        </div>
        <StatusBar />
        <Taskbar />
      </div>
    </div>
  );
}
